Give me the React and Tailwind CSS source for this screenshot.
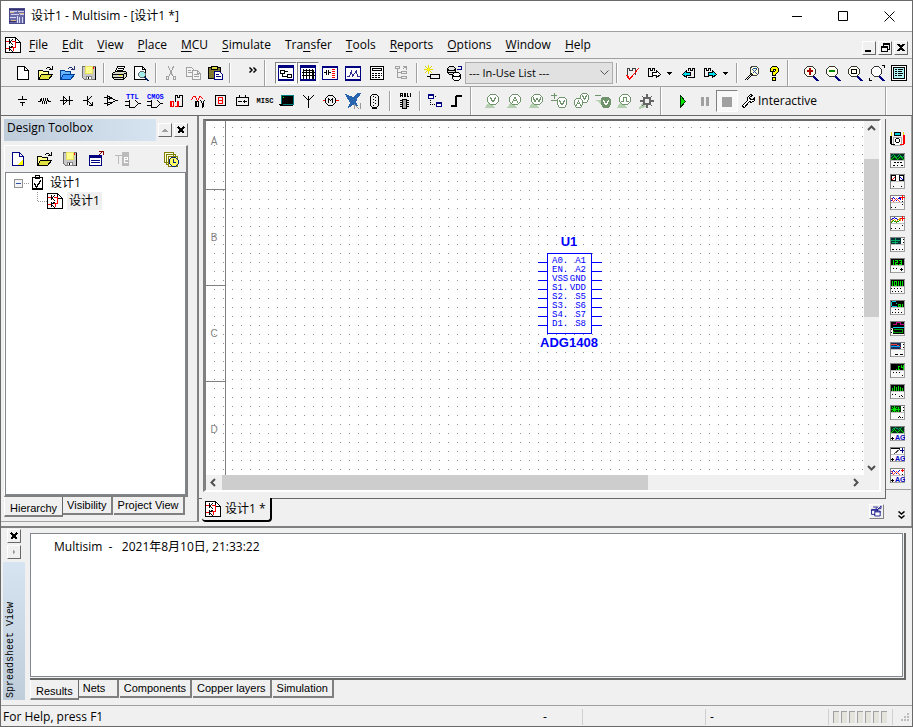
import { useState } from 'react'

// every icon is a list of [path, stroke, fill] on a pixel grid
const K = '#000'
const N = '#000080'
const G = '#a0a0a0'
const GR = '#6f936a'
const ART = {
  app: [['M0 0H15V15H0Z', '#4a4a8c', '#6a6aa8'], ['M1 3H7M9 3H14M2 6H9M11 6H14', '#d0d0ee'], ['M1 9H6M8 8V14M10 9V14M13 9V14', '#d8dcf4'], ['M1 4H4M10 5H14M2 12H6', '#d8b888'], ['M0 1H14M0 13H6', '#30306a']],
  doc: [['M0 0H10L15 5V15H0Z', K, '#fff'], ['M10 0V5H15'], ['M1 4H3M7 4H10V10H7M1 11H3M8 11V13', '#f00'], ['M4 2V6M5 4L7 2M5 5L7 7M4 9V13M5 10L7 9M5 12L7 14']],
  new: [['M2 1H9L13 5V14H2Z', K, '#fff'], ['M9 1V5H13']],
  newBlue: [['M2 1H9L13 5V14H2Z', N, '#fff'], ['M9 1V5H13', N], ['M10 11L12 9V13H8Z', '#ff0', '#ff0']],
  open: [['M1 14V5H5L6 6H11V9', K, '#ffff90'], ['M1 14L4 9H15L11 14Z', K, '#e0e040'], ['M9 3L10 2H12L14 4M15 1V4H12']],
  openBlue: [['M1 14V5H5L6 6H11V9', '#003c90', '#65b5ff'], ['M1 14L4 9H15L11 14Z', '#003c90', '#3c96ff'], ['M9 3L10 2H12L14 4M15 1V4H12', '#203070']],
  save: [['M1 1H14V14H3L1 12Z', '#707070', '#c8c8c8'], ['M4 1H11V8H4Z', '#e8e060', '#ffff90'], ['M5 11H10V14H5Z', '#888', '#fff'], ['M7 12V13M14 2V14'], ['M12 2V3', '#f00']],
  print: [['M4 6L6 1H13L11 6', K, '#fff'], ['M7 3H11M6 5H10'], ['M1 8L4 6H14L15 7V11L12 14H3L1 12Z', K, '#d6d6c8'], ['M1 9H12L15 7M2 12H12M12 9V14'], ['M8 10H10', '#ff0']],
  preview: [['M1 1H9L12 4V14H1Z', K, '#fff'], ['M9 1V4H12'], ['M7 6H10L12 8V10L10 12H7L5 10V8Z', '#666', '#a5eeee'], ['M12 12L15 15M11 12L14 15', '#002060']],
  cut: [['M5 1L9 10M10 1L6 10', G], ['M3 11H5V14H3ZM10 11H12V14H10Z', G]],
  copy: [['M1 2H6L9 5V11H1Z', G, '#f4f4f4'], ['M3 5H5M3 7H7', G], ['M7 5H12L15 8V14H7Z', G, '#f4f4f4'], ['M9 9H13M9 11H13M12 5V8H15', G]],
  paste: [['M1 2H13V13H1Z', K, '#807830'], ['M4 1H10V4H4Z', K, '#e0d840'], ['M7 6H12L15 9V14H7Z', N, '#fff'], ['M9 9H11M9 11H13', N]],
  hier: [['M0 1H15V14H0Z', N, '#fff'], ['M0 2H15', N], ['M2 5H6V8H2ZM9 9H13V12H9Z'], ['M4 9V11H8M7 6H9'], ['M0 0H15M0 15H15', N]],
  sheet: [['M0 1H15V14H0Z', N, '#fff'], ['M0 2H15', N], ['M3 5H13V13M3 4V13M6 4V13M9 4V13M12 4V13M2 7H14M2 10H14'], ['M0 0H15M0 15H15', N]],
  db: [['M0 1H15V14H0Z', N, '#fff'], ['M0 2H15', N], ['M2 7H4M4 5V9M6 5V9M6 7H8'], ['M10 4H12M10 6H12M10 8H12M10 10H12M10 12H12', '#f00']],
  graph: [['M0 1H15V14H0Z', N, '#fff'], ['M0 2H15', N], ['M2 11H4L6 5L7 11L9 8L11 5L12 11H14', '#303090'], ['M0 15H15', N]],
  calc: [['M1 1H14V14H1Z', K, '#fff'], ['M3 3H12V5H3Z'], ['M3 8H4M6 8H7M9 8H10M12 8H12M3 10H4M6 10H7M9 10H10M12 10H12M3 12H4M6 12H7M9 12H10']],
  tree: [['M2 1H6V3H2ZM4 4V12H8M4 7H8', G], ['M8 6H13V8H8ZM8 11H13V13H8Z', G], ['M13 4V1L10 3M10 1H13', G]],
  spark: [['M4 0V8M0 4H8M1 1L7 7M7 1L1 7', '#e0d800'], ['M4 3V5M3 4H5', '#ff0'], ['M6 9H15V13H6ZM3 11H6']],
  dbs: [['M1 3L3 1H7L9 3V7L7 9H3L1 7Z', K, '#ddd'], ['M1 4L3 5H7L9 4M1 7H9'], ['M6 9L8 7H12L14 9V13L12 15H8L6 13Z', K, '#fff'], ['M6 10L8 11H12L14 10'], ['M11 4H15V1M12 1H15', N]],
  erc: [['M3 10V3H5V5H8V3H11V9', '#404040'], ['M2 10L5 14L14 3M3 10L5 13', '#f00']],
  fwd: [['M2 3V11H6M2 3H4V5H6V3H8V5'], ['M6 7H10V5L14 9L10 12V10H6Z', K, '#fff']],
  back: [['M12 3H14V12H8M12 3V5H10V3H8V5'], ['M10 7H6V5L2 9L6 12V10H10Z', K, '#00e0f0']],
  fwdCyan: [['M2 3V11H6M2 3H4V5H6V3H8V5'], ['M6 7H10V5L14 9L10 12V10H6Z', K, '#00e0f0']],
  find: [['M7 1H12L14 3V8L12 10H8L6 8V3Z', '#444', '#ffffd8'], ['M8 4L12 8M12 4L9 7M9 3H12', '#2050a0'], ['M7 8L1 14M8 9L3 14', K]],
  help: [['M4 5V3L6 1H10L12 3V6L9 9V10H6V7L9 5V4H7V6H4Z', K, '#ff0'], ['M6 12H9V15H6Z', K, '#ff0']],
  zoomIn: [['M4 1H9L12 4V8L9 11H4L1 8V4Z', '#333', '#fffff0'], ['M4 6H9M4 5H9M6 3V9M7 3V9', '#a00'], ['M10 11L14 15M11 11L15 15M10 12L13 15', N]],
  zoomOut: [['M4 1H9L12 4V8L9 11H4L1 8V4Z', '#333', '#fffff0'], ['M4 6H9M4 5H9', '#080'], ['M10 11L14 15M11 11L15 15M10 12L13 15', N]],
  zoomArea: [['M4 1H9L12 4V8L9 11H4L1 8V4Z', '#333', '#fffff0'], ['M4 4H9V8H4Z'], ['M10 11L14 15M11 11L15 15M10 12L13 15', N]],
  zoomFit: [['M5 1H9L12 4V8L9 11H5L2 8V4Z', '#333', '#fff'], ['M13 0H15V2M0 13V15H2'], ['M10 11L14 15M11 11L15 15M10 12L13 15', N]],
  full: [['M0 0H15V15H0Z', K, '#fff'], ['M2 2H13V13H2Z', K, '#b0f4f4'], ['M4 4H5M7 4H11M4 6H5M7 6H10M4 8H5M7 8H11M4 10H5M7 10H10']],

  source: [['M7 3V6M3 6H11M5 9H9M7 9V12']],
  resistor: [['M1 8H2M3 6V8M4 5V7M5 8V10M6 5V7M7 8V10M8 5V7M9 8V10M10 5V7M11 7V8H13']],
  diode: [['M1 7H13M4 3V11M10 3V11', K], ['M5 4L8 7L5 10']],
  transistor: [['M2 7H6M6 3V11M7 6L10 3M7 8L11 12M8 12H11V9']],
  opamp: [['M4 2V12L12 7ZM1 4H4M1 10H4M12 7H14M5 5H7M6 4V6M5 9H7']],
  ttl: [['M4 7V14H9L13 10L10 7M0 8H4M0 12H4M13 10H15']],
  cmos: [['M4 7V14H9L13 10L10 7M0 8H4M0 12H4M13 10H15']],
  miscDigital: [['M6 8V2H8V4H10V2H13V13H10'], ['M1 8H4V13H1ZM2 8V13M8 8V13M9 8V13M6 13H7', '#f00']],
  mixed: [['M0 6L2 3L4 3L6 8L8 3L9 3L11 5', '#f00'], ['M4 8H7V13H4ZM5 8V13M9 7L11 10M13 7L11 10V14M12 10V13']],
  indicator: [['M2 2H12V12H2Z', K, '#eee'], ['M5 4H9M5 7H9M5 10H9M5 5V6M9 5V6M5 8V9M9 8V9', '#f00']],
  power: [['M1 4H13V12H1ZM4 2V4M10 2V4M3 8H6M8 8H11M9 7V9']],
  periph: [['M2 2H14V11H2Z', '#008080', K], ['M0 11H3M1 12H13', K], ['M4 4H4', '#0f0']],
  rf: [['M7 3V14M2 2L7 7L12 2']],
  motor: [['M5 2H9L12 5V9L9 12H5L2 9V5ZM5 9V5L7 7L9 5V9'], ['M0 7H1M13 7H15', '#f00']],
  ni: [['M0 1L5 3L8 4L12 0L15 0L11 5L10 9L12 12L7 11L3 14L5 9L3 6Z', '#2864ae', '#2864ae'], ['M9 11V15M9 11L13 15M15 10V15', '#999']],
  conn: [['M5 1H9L11 3V12L9 14H5L3 12V3Z', K, '#eee'], ['M6 3V3M8 4V4M6 6V6M8 7V7M6 9V9M8 10V10M6 12V12M5 15H9']],
  mcu: [['M3 7H11M3 9H11M3 11H11M3 13H11'], ['M5 6H9V15H5Z', K, '#aaa'], ['M3 0V3M4 0H5V3M7 0H8V3H7ZM10 0V3H11M13 0V3M3 2H5']],
  hblock: [['M1 1H6V5H1ZM9 9H14V13H9Z', N, '#fff'], ['M1 2H6M9 10H14', N], ['M3 7V7M3 9V9M3 11V11M5 11V11M7 11V11M8 3V3']],
  bus: [['M2 13H7V2H12M2 12H7M8 3H12M6 3V12']],

  probeV: [['M5 8L0 14H9', '#b5d0b0', '#b5d0b0'], ['M5 1H10L13 4V8L10 11H5L2 8V4Z', GR, '#fff'], ['M5 4L7 8H8L10 4', GR]],
  probeA: [['M5 8L0 14H9', '#b5d0b0', '#b5d0b0'], ['M5 1H10L13 4V8L10 11H5L2 8V4Z', GR, '#fff'], ['M5 9L7 4H8L10 9M6 7H9', GR]],
  probeW: [['M5 8L0 14H9', '#b5d0b0', '#b5d0b0'], ['M5 1H10L13 4V8L10 11H5L2 8V4Z', GR, '#fff'], ['M4 4L5 8H6L7 5H8L9 8H10L11 4', GR]],
  probeD: [['M0 2H5M3 0V5M0 7H5', GR], ['M8 4H13L15 6V11L13 14H8L6 11V6Z', GR, '#fff'], ['M8 7L10 11H11L13 7', GR]],
  probeVA: [['M9 0H13L15 2V6L13 9H9L7 6V2Z', GR, '#fff'], ['M9 2L11 6L13 2', GR], ['M3 5H7L9 7V11L7 14H3L1 11V7Z', GR, '#fff'], ['M3 12L5 7L7 12M4 10H6', GR]],
  probeRef: [['M0 2H5', GR], ['M1 7H5L6 11', '#b5d0b0', '#b5d0b0'], ['M7 4H13L15 6V11L13 14H8L6 11V6Z', GR, GR], ['M8 7L10 11H11L13 7', '#fff']],
  probeDig: [['M5 8L0 14H9', '#b5d0b0', '#b5d0b0'], ['M5 1H10L13 4V8L10 11H5L2 8V4Z', GR, '#fff'], ['M4 8H6V4H9V8H11', GR]],
  gear: [['M0 15L3 10L6 13Z', '#b5d0b0', '#b5d0b0'], ['M4 4H11V11H4Z', '#666', '#666'], ['M7 1V14M8 1V14M1 7H14M1 8H14M3 3L12 12M12 3L3 12', '#666'], ['M6 6H9V9H6Z', '#f0f0f0', '#f0f0f0']],
  run: [['M5 2V14L10 8Z', '#003000', '#00e800']],
  pause: [['M4 4V12M5 4V12M6 4V12M9 4V12M10 4V12M11 4V12', G]],
  stop: [['M3 4H12V13H3Z', G, G]],
  wrench: [['M12 2L9 4L10 6L13 6L14 4V7L11 9L9 8L4 14L2 13V12L7 7L7 4L10 1Z', K, '#fff']],
  closeDoc: [['M1 4H13V14H1Z', N, '#fff'], ['M1 5H13M1 6H13M3 9H11M3 11H11', N], ['M11 3L14 0M11 0H15V3', '#800000']],
  rename: [['M1 4H8M4 4V12', '#bbb'], ['M8 1H14V14H8Z', '#bbb', '#bbb'], ['M10 8H13V6H10V11H13', '#fff']],
  stack: [['M1 1H10V11H1ZM3 3H12V13H3Z', '#808000', '#ffffe0'], ['M5 5H14V15H5Z', '#808000', '#ffffe0'], ['M8 6H12L15 9V12L12 15H9L6 12V8Z', '#002080', '#ffff60'], ['M10 8V11H12', '#002080']],
  clip: [['M2 2H12V14H2Z', K, '#fff'], ['M2 13H12M12 3V14M5 0H9V3H5Z', K], ['M4 8L6 11L10 5M4 9L6 12L10 6']],
  float: [['M2 5H9V11H2ZM4 2H8', N, '#fff'], ['M6 7H12V13H6Z', N, '#fff'], ['M2 6H9M6 8H12M7 4L9 2M13 1V4H10M13 1L9 5', N]],
}

function Icon({ name, size = 16 }) {
  return (
    <svg width={size} height={size} viewBox="0 0 16 16" shapeRendering="crispEdges" className="shrink-0 overflow-visible" aria-hidden="true">
      <g transform="translate(.5 .5)" strokeLinecap="square" strokeMiterlimit="1.5">
        {ART[name].map(([d, stroke = K, fill = 'none'], i) => (
          <path key={i} d={d} stroke={stroke} fill={fill} />
        ))}
      </g>
      {name === 'ttl' && <text x="1" y="6" fontSize="7" fontWeight="bold" fontFamily="Liberation Mono, monospace" fill="#00f">TTL</text>}
      {name === 'cmos' && <text x="0" y="6" fontSize="7" fontWeight="bold" fontFamily="Liberation Mono, monospace" fill="#00f">CMOS</text>}
    </svg>
  )
}

function Tool({ name, label, wide, pressed }) {
  return (
    <button
      aria-label={label || name}
      className={`flex h-[22px] shrink-0 items-center justify-center ${wide ? 'w-6' : 'w-[22px]'} ${pressed ? 'border border-t-[#808080] border-l-[#808080] border-r-white border-b-white bg-[#f8f8f8]' : ''}`}
    >
      <Icon name={name} />
    </button>
  )
}

const Sep = () => <span className="mx-[3px] h-5 w-[2px] shrink-0 border-l border-[#a0a0a0] bg-white" />
const Divider = () => <span className="w-[2px] shrink-0 self-stretch border-l border-[#a0a0a0] bg-white" />

function Arrow() {
  return (
    <button aria-label="More" className="flex w-2 shrink-0 justify-center">
      <svg width="6" height="3" shapeRendering="crispEdges"><path d="M0 0H6L3 3Z" /></svg>
    </button>
  )
}

const MENU = ['File', 'Edit', 'View', 'Place', 'MCU', 'Simulate', 'Transfer', 'Tools', 'Reports', 'Options', 'Window', 'Help']
const ACCESS = { Transfer: 3, MCU: 0 }

function TitleBar() {
  return (
    <header className="flex h-[31px] shrink-0 items-center border-b border-[#a0a0a0] bg-white pl-2">
      <Icon name="app" />
      <h1 className="ml-[6px] flex-1">设计1 - Multisim - [设计1 *]</h1>
      <button aria-label="Minimize" className="flex h-full w-[46px] items-center justify-center"><svg width="10" height="10"><path d="M0 5.500H10" stroke="#000" /></svg></button>
      <button aria-label="Maximize" className="flex h-full w-[46px] items-center justify-center"><svg width="10" height="10"><path d="M.5 .5H9.500V9.500H.5Z" stroke="#000" fill="none" /></svg></button>
      <button aria-label="Close" className="flex h-full w-[46px] items-center justify-center"><svg width="11" height="11"><path d="M.5 .5L10.500 10.500M10.500 .5L.5 10.500" stroke="#000" /></svg></button>
    </header>
  )
}

function SmallButton({ label, d, muted }) {
  return (
    <button aria-label={label} className="flex size-[14px] items-center justify-center border border-t-white border-l-white border-r-[#696969] border-b-[#696969] bg-[#f0f0f0]">
      <svg width="10" height="10" shapeRendering="crispEdges"><path d={d} stroke={muted ? '#a0a0a0' : '#000'} strokeWidth={muted ? 1 : 2} fill={muted ? '#a0a0a0' : 'none'} /></svg>
    </button>
  )
}

function MenuBar() {
  return (
    <nav className="flex h-[27px] shrink-0 items-center border-b border-[#a0a0a0] pl-1">
      <Icon name="doc" />
      <div className="ml-px flex flex-1">
        {MENU.map((m) => {
          const i = ACCESS[m] || 0
          return (
            <button key={m} className="px-[7px]">
              {m.slice(0, i)}<span className="underline underline-offset-2">{m[i]}</span>{m.slice(i + 1)}
            </button>
          )
        })}
      </div>
      <div className="mr-1 flex gap-[2px] self-end pb-[3px]">
        <SmallButton label="Minimize document" d="M1 8H7" />
        <button aria-label="Restore document" className="flex size-[14px] items-center justify-center border border-t-white border-l-white border-r-[#696969] border-b-[#696969]">
          <svg width="10" height="10" shapeRendering="crispEdges"><path d="M3.500 3V1.500H9.500V6.500H8M1.500 4.500H7.500V8.500H1.500ZM3 .5H10M1 3.500H8" stroke="#000" fill="none" /></svg>
        </button>
        <SmallButton label="Close document" d="M2 1L8 8M8 1L2 8" />
      </div>
    </nav>
  )
}

function MainToolbar() {
  return (
    <div className="flex h-7 shrink-0 items-center overflow-hidden border-b border-[#a0a0a0] pt-px pl-[11px]">
      {['new', 'open', 'openBlue', 'save'].map((n) => <Tool key={n} name={n} />)}
      <Sep />
      <Tool name="print" /><Tool name="preview" />
      <Sep />
      <Tool name="cut" /><Tool name="copy" /><Tool name="paste" />
      <Sep />
      <button aria-label="More buttons" className="mr-1 ml-3 flex h-5 w-[14px] shrink-0 justify-center pt-1">
        <svg width="8" height="6"><path d="M.5 .5L3 3L.5 5.500M4.500 .5L7 3L4.500 5.500" stroke="#000" strokeWidth="1.500" fill="none" /></svg>
      </button>
      <Divider />
      <span className="w-[9px] shrink-0" />
      <Tool name="hier" pressed /><Tool name="sheet" pressed /><Tool name="db" />
      <Tool name="graph" wide /><Tool name="calc" wide /><Tool name="tree" wide />
      <Sep />
      <Tool name="spark" /><Tool name="dbs" />
      <label className="relative flex h-[22px] w-[148px] shrink-0">
        <select aria-label="In-Use List" className="w-full appearance-none border border-[#adadad] bg-[#e1e1e1] pl-[3px] font-[Open_Sans,sans-serif] text-[11px]">
          <option>--- In-Use List ---</option>
        </select>
        <svg width="9" height="6" className="pointer-events-none absolute top-2 right-1"><path d="M.5 .5L4.500 4.500L8.500 .5" stroke="#555" fill="none" /></svg>
      </label>
      <Sep />
      <Tool name="erc" /><Tool name="fwd" /><Arrow />
      <span className="w-1 shrink-0" />
      <Tool name="back" /><Tool name="fwdCyan" /><Arrow />
      <span className="w-1 shrink-0" />
      <Sep />
      <Tool name="find" /><Tool name="help" />
      <span className="w-[2px] shrink-0" />
      <Divider />
      <span className="w-[11px] shrink-0" />
      {['zoomIn', 'zoomOut', 'zoomArea', 'zoomFit', 'full'].map((n) => <Tool key={n} name={n} />)}
    </div>
  )
}

const PARTS = ['source', 'resistor', 'diode', 'transistor', 'opamp', 'ttl', 'cmos', 'miscDigital', 'mixed', 'indicator', 'power']
const PROBES = ['probeV', 'probeA', 'probeW', 'probeD', 'probeVA', 'probeRef', 'probeDig', 'gear']

function PartsToolbar() {
  return (
    <div className="flex h-[29px] shrink-0 items-center overflow-hidden border-b border-[#696969] pl-[11px]">
      {PARTS.map((n) => <Tool key={n} name={n} />)}
      <button className="h-[22px] w-[22px] shrink-0 text-center font-[Liberation_Mono,monospace] text-[7px] leading-[20px] font-bold">MISC</button>
      {['periph', 'rf', 'motor', 'ni', 'conn'].map((n) => <Tool key={n} name={n} />)}
      <Sep />
      <Tool name="mcu" />
      <Sep />
      <Tool name="hblock" /><Tool name="bus" />
      <span className="w-[2px]" />
      <Divider />
      <span className="w-[10px] shrink-0" />
      {PROBES.map((n) => <Tool key={n} name={n} />)}
      <span className="w-[2px]" />
      <Divider />
      <span className="w-[10px] shrink-0" />
      <Tool name="run" /><Tool name="pause" /><Tool name="stop" pressed />
      <button className="flex items-center"><span className="flex w-5 justify-center"><Icon name="wrench" /></span>Interactive</button>
      <span className="flex-1" />
      <Divider />
      <span className="w-[25px] shrink-0" />
    </div>
  )
}

function Tabs({ items, active, onPick }) {
  return (
    <div role="tablist" className="flex items-start font-[Liberation_Sans,sans-serif] text-[11px] leading-[14px] whitespace-nowrap">
      {items.map((t) => (
        <button
          key={t}
          role="tab"
          aria-selected={t === active}
          onClick={() => onPick(t)}
          className={t === active
            ? 'h-5 shrink-0 border-r border-b-2 border-l border-l-white border-r-[#696969] border-b-[#808080] px-[5px] pt-1'
            : 'mr-px h-[18px] min-w-10 shrink-0 border-r-2 border-b-2 border-r-[#808080] border-b-[#808080] px-1 text-left'}
        >
          {t}
        </button>
      ))}
    </div>
  )
}

function DesignToolbox() {
  const [tab, setTab] = useState('Hierarchy')
  return (
    <aside className="mb-1 flex w-[198px] shrink-0 flex-col border-r-2 border-b border-r-[#808080] border-b-[#a0a0a0] pt-[3px] pr-[9px] pl-[3px]">
      <div className="flex h-[22px] items-center gap-[2px]">
        <h2 className="h-full flex-1 bg-linear-to-r from-[#bfcddb] to-[#d6e4f2] pl-[3px] leading-[18px]">Design Toolbox</h2>
        <SmallButton label="Collapse" muted d="M3 6L5 4L7 6Z" />
        <SmallButton label="Close toolbox" d="M2 2L8 8M8 2L2 8" />
      </div>
      <section className="mt-1 flex flex-1 flex-col border-t border-r-2 border-b-2 border-l border-t-white border-l-white border-r-[#808080] border-b-[#808080]">
        <div className="flex h-[26px] items-center gap-[4px] pr-1 pl-[2px]">
          {['newBlue', 'open', 'save', 'closeDoc', 'rename'].map((n) => <Tool key={n} name={n} />)}
          <span className="flex-1" />
          <Tool name="stack" />
        </div>
        <ul className="flex-1 border border-[#828790] bg-white pt-px pl-2 leading-[18px]">
          <li>
            <div className="flex h-[18px] items-center">
              <svg width="16" height="9" shapeRendering="crispEdges"><path d="M.5 .5H8.500V8.500H.5Z" stroke="#919191" fill="#f4f4f4" /><path d="M2 4.500H7" stroke="#3050a0" /><path d="M10 4.500H16" stroke="#999" strokeDasharray="1 1" /></svg>
              <Icon name="clip" />
              <span className="ml-1">设计1</span>
            </div>
            <ul>
              <li className="flex h-[18px] items-center pl-[22px]">
                <svg width="11" height="18" shapeRendering="crispEdges"><path d="M1.500 0V9.500H11" stroke="#999" fill="none" strokeDasharray="1 1" /></svg>
                <Icon name="doc" />
                <span className="ml-1 bg-[#f0f0f0] px-[2px]">设计1</span>
              </li>
            </ul>
          </li>
        </ul>
      </section>
      <div className="h-[24px]"><Tabs items={['Hierarchy', 'Visibility', 'Project View']} active={tab} onPick={setTab} /></div>
    </aside>
  )
}

const PINS = [['A0.', 'A1'], ['EN.', 'A2'], ['VSS', 'GND'], ['S1.', 'VDD'], ['S2.', 'S5'], ['S3.', 'S6'], ['S4.', 'S7'], ['D1.', 'S8']]

// IC symbol, pins every 9px on the grid
function Chip() {
  return (
    <div className="absolute top-[113px] left-[332px] w-[62px] text-center text-[13px] leading-4 font-bold text-[#0000ff] font-[Liberation_Sans,sans-serif]">
      <p>U1</p>
      <div className="relative mt-[3px] px-2">
        <svg width="64" height="81" shapeRendering="crispEdges" className="absolute top-0 left-0">
          <path d="M9.500 .5H53.500V80.500H9.500Z" stroke="#0000ff" fill="none" />
          {PINS.map((p, i) => <path key={p[0]} d={`M0 ${9.5 + i * 9}H9M54 ${9.5 + i * 9}H64`} stroke="#0000ff" />)}
        </svg>
        <div className="h-[81px] px-[6px] pt-1 font-[Liberation_Mono,monospace] text-[9px] leading-[9px] font-normal">
          {PINS.map(([l, r]) => <p key={l} className="flex justify-between"><span>{l}</span><span>{r}</span></p>)}
        </div>
      </div>
      <p className="-mx-4 mt-px">ADG1408</p>
    </div>
  )
}

function ScrollArrow({ d, label }) {
  return (
    <button aria-label={label} className="flex size-[15px] shrink-0 items-center justify-center">
      <svg width="9" height="9"><path d={d} stroke="#505050" strokeWidth="2" fill="none" /></svg>
    </button>
  )
}

function Canvas() {
  return (
    <div className="flex min-h-0 flex-1 flex-col border-2 border-l-[3px] border-t-[#696969] border-l-[#808080] border-r-white border-b-white bg-[#f0f0f0]">
      <div className="flex min-h-0 flex-1">
        <div className="relative flex-1 overflow-hidden bg-white">
          <svg width="100%" height="100%" shapeRendering="crispEdges" className="absolute inset-0">
            <defs>
              <pattern id="dots" width="9" height="9" patternUnits="userSpaceOnUse"><rect x="8" y="6" width="1" height="1" fill="#909090" /></pattern>
              <pattern id="zones" width="20" height="96" patternUnits="userSpaceOnUse" y="-27"><rect y="95" width="20" height="1" fill="#808080" /></pattern>
            </defs>
            <rect width="100%" height="100%" fill="url(#dots)" />
            <rect width="20" height="100%" fill="url(#zones)" />
            <path d="M19.500 0V2000" stroke="#808080" />
            {['A', 'B', 'C', 'D'].map((c, i) => (
              <text key={c} x="8" y={24 + i * 96} textAnchor="middle" fontSize="10" fill="#808080" fontFamily="Liberation Sans, sans-serif">{c}</text>
            ))}
          </svg>
          <Chip />
        </div>
        <div className="flex w-[15px] flex-col items-center">
          <ScrollArrow label="Scroll up" d="M1 6L4.500 2.500L8 6" />
          <div className="flex w-full flex-1 flex-col py-1">
            <span className="basis-[6%]" />
            <span className="basis-1/2 bg-[#cdcdcd]" />
          </div>
          <ScrollArrow label="Scroll down" d="M1 3L4.500 6.500L8 3" />
        </div>
      </div>
      <div className="flex h-[15px] items-center pr-4">
        <ScrollArrow label="Scroll left" d="M6 1L2.500 4.500L6 8" />
        <div className="h-full flex-1 pl-px"><span className="block h-full w-[68%] bg-[#cdcdcd]" /></div>
        <ScrollArrow label="Scroll right" d="M3 1L6.500 4.500L3 8" />
      </div>
    </div>
  )
}

function Workspace() {
  return (
    <main className="flex min-w-0 flex-1 flex-col pt-[3px]">
      <div className="flex min-h-0 flex-1 border-r border-b border-[#696969] pr-1 pb-[6px] pl-1">
        <div className="flex min-w-0 flex-1 flex-col"><Canvas /></div>
      </div>
      <div className="flex h-[27px] items-start justify-between pr-[2px] pl-[3px]">
        <button className="-mt-px flex h-6 items-center gap-1 rounded-b-sm border-r-2 border-b-2 border-black bg-[#f0f0f0] pr-1 pl-[3px]">
          <Icon name="doc" />设计1 *
        </button>
        <button aria-label="Windows" className="mt-[5px] flex size-[15px] items-center justify-center border border-t-white border-l-white border-r-[#808080] border-b-[#808080]"><Icon name="float" size={13} /></button>
      </div>
    </main>
  )
}

const LIME = '#00e000'
const BL = '#0000e0'
// [label, screen colour, list of traces, lower terminals]
const INSTRUMENTS = [
  ['Multimeter', null, [], null],
  ['Function generator', '#003018', [['M1 3L3 1L6 4L9 1L12 4L13 3', '#00a060'], ['M1 6L4 3L7 6L10 3L13 6', LIME]], 'M4 9H5M7 9H8M10 9H11M3 12H4M7 12H7M11 12H12'],
  ['Wattmeter', '#fff', [['M1 1H5V6H1ZM9 1H13V6H9Z', K], ['M2 5L4 3', '#f00'], ['M10 3L12 5', BL]], 'M3 12H3M11 12H11'],
  ['Oscilloscope', '#fff', [['M1 5L3 2L6 5L9 2L10 4', BL], ['M1 3L3 6L6 3L9 6', '#f04040'], ['M10 2H14M12 0V4', '#f00']], 'M1 12H1M5 12H5M12 6V6M12 9V9'],
  ['Four channel oscilloscope', '#fff', [['M1 5L3 2L6 5L9 2L10 4', '#f0a000'], ['M1 6L3 4L6 6L9 4', '#00a000'], ['M1 3L4 1L7 3', BL], ['M10 2H14M12 0V4', '#f00']], 'M1 12H1M5 12H5M9 12H9M12 9V9'],
  ['Bode plotter', '#003038', [['M1 3H9M2 5H7M5 1V6', '#00b060'], ['M11 1V6M12 1V6M13 1V6', '#fff'], ['M13 2V2M13 5V5', K]], 'M2 12H3M6 12H6M9 12H9M12 12H12'],
  ['Frequency counter', '#000', [['M3 2V6M5 2H7V4H5V6H7M9 2H11V6H9M10 4H11', LIME]], 'M3 10H3M6 10H6M10 11H12M11 10V12'],
  ['Word generator', '#000', [['M2 2V6M4 2H6V6H4ZM8 2V6M10 2V6M12 2V6', LIME]], 'M1 9H1M4 9H4M7 9H7M10 9H10M2 12H2M5 12H5M8 12H8M11 12H11'],
  ['Logic converter', '#000', [['M2 1H5M1 2V5M2 6H6M6 3V3', '#00c8e0'], ['M8 4H10V6H8ZM12 4V6', LIME]], 'M2 12H2M5 12H5M8 12H8M11 12H11M5 9H5M8 9H8'],
  ['Logic analyzer', '#000', [['M3 3H6V1H10V3H13', '#c00080'], ['M3 6H13', '#00d0e0'], ['M4 8H12V11H3V10', '#00a000']], 'M1 2V2M1 5V5M1 8V8M1 11V11'],
  ['IV analyzer', '#183058', [['M1 2H6L10 5', '#f04040'], ['M1 4H9', '#00a0ff'], ['M11 1V6M12 1V6M13 1V6', '#fff'], ['M13 2V2M13 5V5', K]], 'M5 12H7M10 12H12'],
  ['Distortion analyzer', '#000', [['M6 6H6M8 3V6M9 3V3M9 6V6M11 2V4H13M13 2V6', LIME]], 'M3 9H3M6 9H6M9 9H9M12 12H12'],
  ['Spectrum analyzer', '#000', [['M2 4V6M4 2V6M6 3V6M8 2V6M10 3V6M12 4V6', LIME]], 'M2 10H2M5 10H5M9 12H9M12 12H12M11 11H11'],
  ['Network analyzer', '#003000', [['M2 2L6 6M6 2L2 6M4 1V6M1 4H9M8 2V6', LIME], ['M11 1V6M12 1V6M13 1V6', '#fff'], ['M13 2V2M13 5V5', K]], 'M8 12H8M10 12H10M12 12H12M9 11H9'],
  ['Agilent function generator', '#003018', [['M1 6L4 3L7 6L10 3L13 6', LIME], ['M2 3L5 1L8 3L11 1', '#00a060']], 'AG'],
  ['Agilent multimeter', '#fff', [['M1 1H9', K], ['M4 6L9 2', '#444'], ['M10 3H13M12 1V5', N]], 'AG'],
  ['Agilent oscilloscope', '#fff', [['M1 5L3 2L6 5L9 2', BL], ['M1 3L3 6L6 3L9 6', '#f04040'], ['M11 2H13M12 1V3', '#f00'], ['M12 6V6', K]], 'AG'],
]

function Instrument({ item }) {
  const [label, screen, traces, pads] = item
  return (
    <button aria-label={label} className="flex size-[15px] shrink-0">
      <svg width="15" height="15" shapeRendering="crispEdges">
        {screen ? (
          <g transform="translate(.5 .5)" fill="none" strokeLinecap="square" strokeMiterlimit="1.5">
            <path d="M0 0H14V14H0Z" fill="#f8f8f8" stroke="#a0a0a0" />
            <path d="M1 1H13V6H1Z" fill={screen} stroke={screen} />
            <path d="M0 14V0H14" stroke="#808080" />
            <path d="M1 7H13" stroke="#c0c0c0" />
            {label === 'Logic analyzer' && <path d="M3 1H13V12H3Z" fill="#000" stroke="#000" />}
            {traces.map(([d, color]) => <path key={d} d={d} stroke={color} />)}
            {pads === 'AG' ? <path d="M2 11V13M1 12H3" stroke="#000" /> : <path d={pads} stroke="#000" />}
          </g>
        ) : (
          <g transform="translate(.5 .5)" fill="none" strokeLinecap="square">
            <path d="M4 0H10V3H4Z" fill="#00d0e0" stroke="#000" />
            <path d="M3 5H11V13H3Z" fill="#fff" stroke="#aaa" />
            <path d="M6 6H8L9 7V9L8 10H6L5 9V7Z" stroke="#000" />
            <path d="M1 0V3M13 0V2" stroke="#e8d800" />
            <path d="M1 4V12H4M0 4V11" stroke="#000" />
            <path d="M13 3V12H10M14 3V11" stroke="#f00" />
          </g>
        )}
        {pads === 'AG' && <text x="5" y="14" fontSize="7" fontWeight="bold" fill="#0000c0" fontFamily="Liberation Sans, sans-serif">AG</text>}
      </svg>
    </button>
  )
}

function Instruments() {
  return (
    <aside className="flex w-[26px] shrink-0 flex-col items-center border-r border-[#a0a0a0]">
      <div className="flex flex-col items-center gap-[6px] self-stretch border-b border-[#a0a0a0] pt-4 pr-[2px] pb-[6px]">
        {INSTRUMENTS.map((i) => <Instrument key={i[0]} item={i} />)}
      </div>
      <button aria-label="More instruments" className="mt-[21px] ml-[6px]">
        <svg width="7" height="8"><path d="M.5 .5L3.500 3L6.500 .5M.5 4.500L3.500 7L6.500 4.500" stroke="#000" strokeWidth="1.500" fill="none" /></svg>
      </button>
    </aside>
  )
}

function SpreadsheetView() {
  const [tab, setTab] = useState('Results')
  return (
    <section className="flex h-[180px] shrink-0 border-t-2 border-b border-t-[#808080] border-b-[#a0a0a0] pr-[6px] pl-[2px]">
      <div className="flex w-[27px] flex-col">
        <div className="flex flex-col gap-[2px] pt-px pb-[3px] pl-1">
          <SmallButton label="Close panel" d="M2 2L8 8M8 2L2 8" />
          <SmallButton label="Expand panel" muted d="M4 3L6 5L4 7Z" />
        </div>
        <h2 className="mb-[5px] w-[22px] flex-1 rotate-180 bg-linear-to-t from-[#d6e4f2] to-[#bfcddb] pt-[2px] font-[Liberation_Mono,monospace] text-[10px] leading-4 [writing-mode:vertical-rl]">Spreadsheet View</h2>
      </div>
      <div className="flex min-w-0 flex-1 flex-col pt-[5px]">
        <div className="flex flex-1 border-r-2 border-b-2 border-[#696969]">
          <div className="mr-px mb-px flex-1 border border-[#828790] bg-white pt-[5px] pl-[23px] whitespace-pre">{'Multisim  -   2021年8月10日, 21:33:22'}</div>
        </div>
        <div className="h-[25px]"><Tabs items={['Results', 'Nets', 'Components', 'Copper layers', 'Simulation']} active={tab} onPick={setTab} /></div>
      </div>
    </section>
  )
}

function StatusBar() {
  return (
    <footer className="flex h-[20px] shrink-0 items-center pt-[2px] pl-[2px]">
      <span className="flex-1">For Help, press F1</span>
      <span className="h-4 w-[40px] border-r border-[#d0d0d0] leading-4">-</span>
      <span className="h-4 w-[123px] border-r border-[#d0d0d0]" />
      <span className="h-4 w-[123px] border-r border-[#d0d0d0] pl-1 leading-4">-</span>
      <span className="flex h-4 w-16 items-center gap-[2px] border-r border-[#d0d0d0] pl-1">
        {[0, 1, 2, 3, 4, 5, 6].map((i) => <span key={i} className="h-3 w-[6px] border-t border-l border-[#a0a0a0] bg-[#e4e4dc]" />)}
      </span>
      <svg width="19" height="12" shapeRendering="crispEdges"><path d="M14 2h2v2h-2zM11 5h2v2h-2zM14 5h2v2h-2zM8 8h2v2h-2zM11 8h2v2h-2zM14 8h2v2h-2z" fill="#bcbcbc" /></svg>
    </footer>
  )
}

export default function App() {
  return (
    <div className="flex h-screen min-h-[640px] flex-col overflow-hidden border border-[#696969] bg-[#f0f0f0] font-['Open_Sans','Noto_Sans_CJK_SC',sans-serif] text-[12px] leading-4 text-black">
      <TitleBar />
      <MenuBar />
      <MainToolbar />
      <PartsToolbar />
      <div className="flex min-h-0 flex-1">
        <DesignToolbox />
        <Workspace />
        <Instruments />
      </div>
      <SpreadsheetView />
      <StatusBar />
    </div>
  )
}
